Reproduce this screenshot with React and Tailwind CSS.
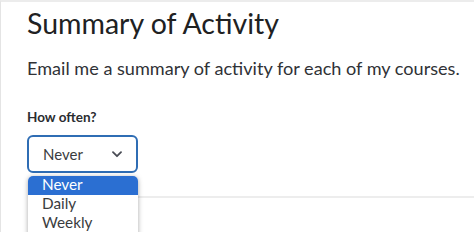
const FONT = { fontFamily: 'Lato, "Noto Sans", sans-serif' }

function Chevron() {
  return (
    <svg width="10" height="7" viewBox="0 0 10 7" fill="none">
      <path d="M1 1.2 L5 5.2 L9 1.2" stroke="#494c55" strokeWidth="1.8" strokeLinecap="round" strokeLinejoin="round" />
    </svg>
  )
}

const OPTIONS = ['Never', 'Daily', 'Weekly']

export default function App() {
  return (
    <div className="w-[474px] h-[232px] overflow-hidden bg-white relative border-t-2 border-l border-t-[#ececec] border-l-[#e4e4e4]" style={FONT}>
      <div className="pl-[26px] pt-[3px]">
        <h1 className="text-[28.5px] leading-[36px] text-[#202122]">Summary of Activity</h1>
        <p className="mt-[15px] text-[18.1px] leading-[24px] text-[#303236]">
          Email me a summary of activity for each of my courses.
        </p>
        <div className="mt-[28px] text-[13.5px] leading-[18px] font-bold text-[#2a2c30]">How often?</div>
        <div className="mt-[9px] w-[111px] h-[38px] rounded-[6px] border-2 border-[#2f6db4] flex items-center justify-between pl-[14px] pr-[14px] text-[15px] text-[#3a3c40]">
          <span>Never</span>
          <Chevron />
        </div>
      </div>
      {/* separator under the form */}
      <div className="absolute left-[137px] right-0 top-[194px] h-[2px] bg-[#ededed]" />
      {/* open select list */}
      <div className="absolute left-[27px] top-[174px] w-[110px] h-[70px] bg-white rounded-[5px] shadow-[0_1px_5px_rgba(0,0,0,0.35)] overflow-hidden text-[15.3px] leading-[17px] text-[#3a3c40]">
        {OPTIONS.map((o, i) => (
          <div
            key={o}
            className={`pl-[14px] h-[19px] ${i === 0 ? 'bg-[#2b6fd2] text-white' : ''}`}
          >
            {o}
          </div>
        ))}
      </div>
    </div>
  )
}
